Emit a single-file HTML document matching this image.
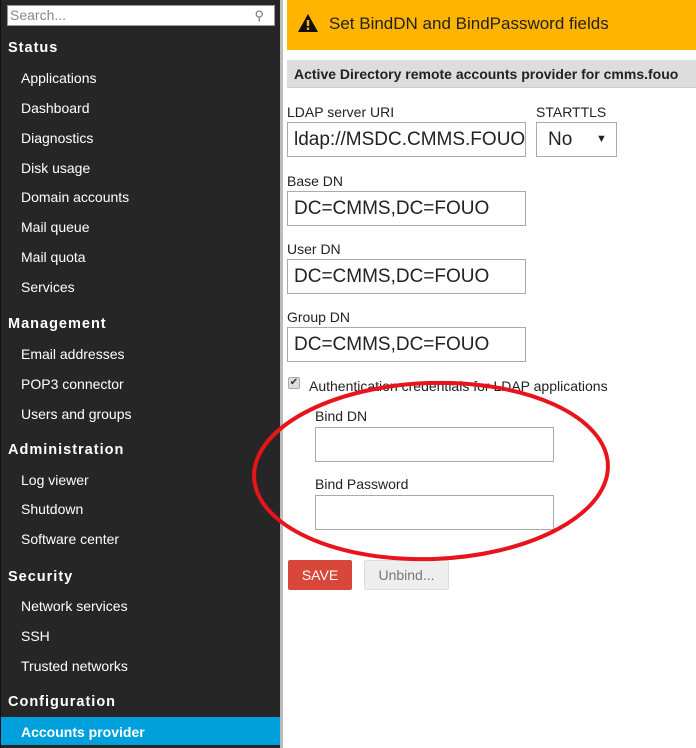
<!DOCTYPE html>
<html><head><style>
*{margin:0;padding:0;box-sizing:border-box}
body{width:696px;height:748px;overflow:hidden;background:#fff;font-family:"Liberation Sans",Arial,sans-serif;position:relative}
#sb{position:absolute;left:0;top:0;width:280px;height:748px;background:#262626;border-left:1px solid #111}
#sbb{position:absolute;left:280px;top:0;width:3px;height:748px;background:#bbb}
.s{position:absolute;left:21px;color:#fff;font-size:14px;line-height:18px;margin-top:1px}
.h{position:absolute;left:8px;color:#fff;font-size:14.5px;font-weight:bold;letter-spacing:1px;line-height:18px;margin-top:1px}
.a{position:absolute;color:#222;font-size:14px;line-height:16px}
.in{position:absolute;border:1px solid #aaa;background:#fff;font-size:19px;line-height:33px;padding-left:6px;color:#222;overflow:hidden;white-space:nowrap}
</style></head><body>
<div id="sb"></div><div id="sbb"></div>
<div style="position:absolute;left:7px;top:5px;width:268px;height:21px;background:#fff;border:1px solid #999;font-size:14px;color:#888;padding-left:2px;line-height:19px">Search...<span style="position:absolute;right:10px;top:0;color:#777;font-size:13px">&#9906;</span></div>
<div class="h" style="top:38px">Status</div>
<div class="s" style="top:68px">Applications</div>
<div class="s" style="top:98px">Dashboard</div>
<div class="s" style="top:128px">Diagnostics</div>
<div class="s" style="top:158px">Disk usage</div>
<div class="s" style="top:187px">Domain accounts</div>
<div class="s" style="top:217px">Mail queue</div>
<div class="s" style="top:247px">Mail quota</div>
<div class="s" style="top:277px">Services</div>
<div class="h" style="top:314px">Management</div>
<div class="s" style="top:344px">Email addresses</div>
<div class="s" style="top:374px">POP3 connector</div>
<div class="s" style="top:404px">Users and groups</div>
<div class="h" style="top:440px">Administration</div>
<div class="s" style="top:470px">Log viewer</div>
<div class="s" style="top:499px">Shutdown</div>
<div class="s" style="top:529px">Software center</div>
<div class="h" style="top:567px">Security</div>
<div class="s" style="top:596px">Network services</div>
<div class="s" style="top:626px">SSH</div>
<div class="s" style="top:656px">Trusted networks</div>
<div class="h" style="top:692px">Configuration</div>
<div style="position:absolute;left:1px;top:717px;width:279px;height:28px;background:#00a0dc"></div>
<div class="s" style="top:722px;font-weight:bold">Accounts provider</div>

<div style="position:absolute;left:287px;top:0;width:409px;height:50px;background:#ffb400"></div>
<svg style="position:absolute;left:298px;top:14px" width="20" height="18" viewBox="0 0 20 18"><path d="M10 0L20 18H0Z" fill="#111"/><rect x="8.8" y="6" width="2.4" height="6" fill="#ffb400"/><rect x="8.8" y="13.5" width="2.4" height="2.4" fill="#ffb400"/></svg>
<div style="position:absolute;left:329px;top:14px;font-size:17px;color:#222">Set BindDN and BindPassword fields</div>
<div style="position:absolute;left:287px;top:60px;width:409px;height:28px;background:#ddd;border-bottom:1px solid #ccc"></div>
<div style="position:absolute;left:294px;top:66px;font-size:14px;font-weight:bold;color:#222">Active Directory remote accounts provider for cmms.fouo</div>

<div class="a" style="left:287px;top:104px">LDAP server URI</div>
<div class="a" style="left:536px;top:104px">STARTTLS</div>
<div class="in" style="left:287px;top:122px;width:239px;height:35px">ldap://MSDC.CMMS.FOUO</div>
<div class="in" style="left:536px;top:122px;width:81px;height:35px;padding-left:11px">No<span style="position:absolute;left:59px;top:0;font-size:11px">&#9660;</span></div>
<div class="a" style="left:287px;top:173px">Base DN</div>
<div class="in" style="left:287px;top:191px;width:239px;height:35px">DC=CMMS,DC=FOUO</div>
<div class="a" style="left:287px;top:241px">User DN</div>
<div class="in" style="left:287px;top:259px;width:239px;height:35px">DC=CMMS,DC=FOUO</div>
<div class="a" style="left:287px;top:309px">Group DN</div>
<div class="in" style="left:287px;top:327px;width:239px;height:35px">DC=CMMS,DC=FOUO</div>
<div style="position:absolute;left:288px;top:377px;width:12px;height:12px;border:1px solid #aaa;border-radius:2px;background:#ddd;font-size:10px;line-height:10px;text-align:center;color:#333">&#10004;</div>
<div class="a" style="left:309px;top:378px">Authentication credentials for LDAP applications</div>
<div class="a" style="left:315px;top:408px">Bind DN</div>
<div class="in" style="left:315px;top:427px;width:239px;height:35px"></div>
<div class="a" style="left:315px;top:476px">Bind Password</div>
<div class="in" style="left:315px;top:495px;width:239px;height:35px"></div>
<div style="position:absolute;left:288px;top:560px;width:64px;height:30px;background:#d9473a;border-radius:2px;color:#fff;font-size:14px;line-height:30px;text-align:center">SAVE</div>
<div style="position:absolute;left:364px;top:560px;width:85px;height:30px;background:#eee;border:1px solid #ddd;border-radius:2px;color:#777;font-size:14px;line-height:28px;text-align:center">Unbind...</div>
<svg style="position:absolute;left:0;top:0" width="696" height="748"><ellipse cx="431" cy="471" rx="177" ry="88" fill="none" stroke="#e8141c" stroke-width="4" transform="rotate(-2 431 471)"/></svg>
</body></html>
